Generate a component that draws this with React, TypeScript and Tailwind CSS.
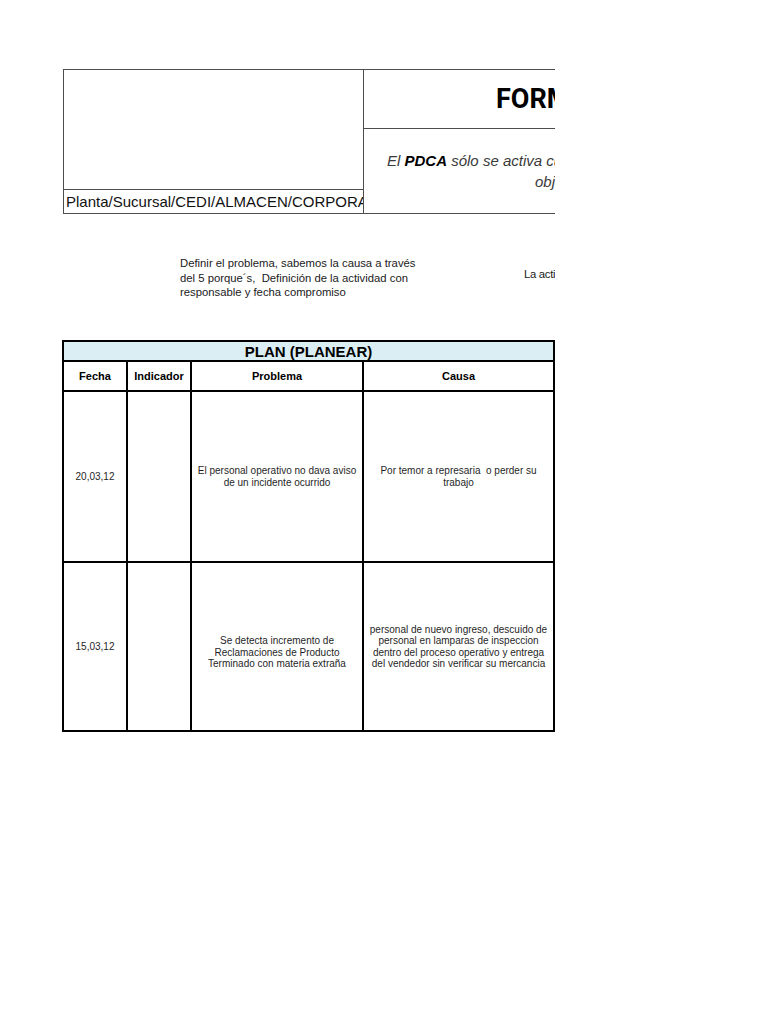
type CellProps = {
  children?: React.ReactNode;
  last?: boolean;
  className?: string;
};

// one table cell, right border on every column but the last
const Cell = ({ children, last, className }: CellProps) => (
  <div
    className={`flex items-center justify-center whitespace-pre text-center ${
      last ? '' : 'border-r-2 border-black'
    } ${className ?? ''}`}
  >
    {children}
  </div>
);

const rows = [
  {
    fecha: '20,03,12',
    problema: 'El personal operativo no dava aviso\nde un incidente ocurrido',
    causa: 'Por temor a represaria  o perder su\ntrabajo',
    height: 'h-[171px] border-b-2 border-black',
    problemaPad: '',
  },
  {
    fecha: '15,03,12',
    problema: 'Se detecta incremento de\nReclamaciones de Producto\nTerminado con materia extraña',
    causa:
      'personal de nuevo ingreso, descuido de\npersonal en lamparas de inspeccion\ndentro del proceso operativo y entrega\ndel vendedor sin verificar su mercancia',
    height: 'h-[167px]',
    problemaPad: 'pt-[12px]',
  },
];

export default function App() {
  return (
    <div className="min-h-[1024px] w-[768px] bg-white font-['Liberation_Sans',Arial,sans-serif] text-black">
      <div className="ml-[62px] w-[493px] overflow-hidden pt-[69px]">
        {/* Header box */}
        <div className="ml-px flex h-[145px] border-y border-l border-[#4d4d4d]">
          <div className="flex w-[300px] shrink-0 flex-col border-r border-[#4d4d4d]">
            <div className="h-[119px]" />
            <div className="flex flex-1 items-center overflow-hidden whitespace-nowrap border-t border-[#4d4d4d] pl-[2px] text-[15px] leading-none text-[#111]">
              Planta/Sucursal/CEDI/ALMACEN/CORPORATIVO
            </div>
          </div>
          <div className="flex min-w-0 flex-1 flex-col overflow-hidden">
            <div className="flex h-[59px] shrink-0 items-center whitespace-nowrap border-b border-[#4d4d4d] pl-[132px] font-['Roboto',sans-serif] text-[27px] font-bold leading-none">
              FORMATO PDCA
            </div>
            <div className="flex flex-1 flex-col justify-center whitespace-nowrap text-[15px] italic leading-[21px] text-[#3a3a3a]">
              <div className="pl-[23px]">
                El <b className="text-black">PDCA</b> sólo se activa cuando no se cumple el
              </div>
              <div className="pl-[171px]">objetivo</div>
            </div>
          </div>
        </div>

        {/* Instructions */}
        <div className="mt-[42px] flex h-[44px] items-start whitespace-pre text-[11.3px] leading-[14.5px] text-[#1a1a1a]">
          <div className="ml-[118px] w-[344px] shrink-0">
            {'Definir el problema, sabemos la causa a través\ndel 5 porque´s,  Definición de la actividad con\nresponsable y fecha compromiso'}
          </div>
          <div className="mt-[11px] tracking-[-0.3px]">La actividad se realiza</div>
        </div>

        {/* PLAN table */}
        <div className="mt-[40px] w-[493px] border-2 border-black text-[#1f1f1f]">
          <div className="flex h-[20px] items-center justify-center border-b-2 border-black bg-[#dbeef4] text-[15px] font-bold leading-none text-black">
            PLAN (PLANEAR)
          </div>
          <div className="grid h-[30px] grid-cols-[64px_64px_172px_189px] border-b-2 border-black text-[11px] font-bold text-black">
            <Cell>Fecha</Cell>
            <Cell>Indicador</Cell>
            <Cell>Problema</Cell>
            <Cell last>Causa</Cell>
          </div>
          {rows.map((r) => (
            <div
              key={r.fecha}
              className={`grid grid-cols-[64px_64px_172px_189px] text-[10px] leading-[11.5px] ${r.height}`}
            >
              <Cell>{r.fecha}</Cell>
              <Cell />
              <Cell className={r.problemaPad}>{r.problema}</Cell>
              <Cell last>{r.causa}</Cell>
            </div>
          ))}
        </div>
      </div>
    </div>
  );
}
